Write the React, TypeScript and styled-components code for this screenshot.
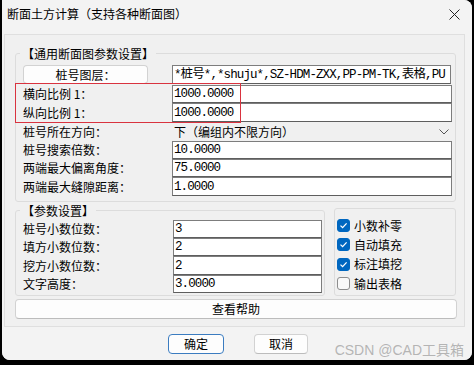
import React from 'react';
import styled, { createGlobalStyle } from 'styled-components';

const Global = createGlobalStyle`
  html, body { margin: 0; padding: 0; background: #000; }
  body {
    width: 474px; height: 365px; overflow: hidden;
    font-family: "Noto Sans CJK SC", "Noto Sans", sans-serif;
    font-size: 12px; color: #000;
  }
  * { box-sizing: border-box; }
`;

const Window = styled.div`
  position: relative;
  margin-left: 2px;
  width: 470px;
  height: 360px;
  background: #f0f0f0;
  border-radius: 0 8px 8px 8px;
  overflow: hidden;
  display: flex;
  flex-direction: column;
`;

const TitleBar = styled.div`
  height: 28px;
  padding: 0 12px 0 5px;
  display: flex;
  align-items: center;
  justify-content: space-between;
  background: #f3f3f3;
  font-size: 12px;
  line-height: 16px;
`;

const Client = styled.div`
  flex: 1;
  padding: 6px 0 0 2px;
  display: flex;
  flex-direction: column;
  background: #f3f3f3;
`;

const Panel = styled.div`
  width: 461px;
  height: 293px;
  border: 1px solid #dfdfdf;
  background: #f0f0f0;
  padding: 10px 8px 0 10px;
  display: flex;
  flex-direction: column;
`;

const Group = styled.fieldset<{ $w?: number }>`
  margin: 0;
  padding: 0;
  width: ${(p) => (p.$w ? `${p.$w}px` : 'auto')};
  border: 1px solid #dcdcdc;
  border-radius: 3px;
  min-width: 0;
`;

const Legend = styled.legend`
  margin-left: 4px;
  padding: 0 2px;
  font-size: 12px;
  line-height: 17px;
  height: 17px;
`;

const Grid = styled.div<{ $cols: string; $rows: string; $pad: string }>`
  position: relative;
  display: grid;
  grid-template-columns: ${(p) => p.$cols};
  grid-template-rows: ${(p) => p.$rows};
  padding: ${(p) => p.$pad};
  align-items: center;
`;

const Label = styled.div`
  font-size: 12px;
  line-height: 16px;
  white-space: nowrap;
  padding-left: 1px;
`;

const Field = styled.div<{ $w?: number }>`
  height: 100%;
  width: ${(p) => (p.$w ? `${p.$w}px` : '100%')};
  background: #fff;
  border: 1px solid #7d7d7d;
  border-bottom-color: #5e5e5e;
  padding: 0 0 0 1px;
  font-family: "Liberation Mono", "Noto Sans CJK SC", monospace;
  font-size: 12.5px;
  letter-spacing: -0.9px;
  line-height: 16px;
  display: flex;
  align-items: center;
  white-space: nowrap;
  overflow: hidden;
`;

const Button = styled.div<{ $w?: number; $h?: number; $primary?: boolean }>`
  width: ${(p) => (p.$w ? `${p.$w}px` : '100%')};
  height: ${(p) => p.$h ?? 20}px;
  background: #fdfdfd;
  border: 1px solid ${(p) => (p.$primary ? '#3b7cc0' : '#d2d2d2')};
  border-bottom-color: ${(p) => (p.$primary ? '#3b7cc0' : '#bcbcbc')};
  border-radius: 4px;
  display: flex;
  align-items: center;
  justify-content: center;
  font-size: 12px;
  line-height: 16px;
`;

const Select = styled.div`
  height: 100%;
  display: flex;
  align-items: center;
  justify-content: space-between;
  padding: 0 3px 0 2px;
  font-size: 12px;
  line-height: 16px;
`;

const Highlight = styled.div`
  position: absolute;
  left: -1px;
  top: 21px;
  width: 226px;
  height: 40px;
  border: 1.5px solid #d9333f;
  pointer-events: none;
`;

const Row = styled.div`
  display: flex;
  align-items: flex-start;
`;

const CheckBox = styled.div`
  margin-left: 9px;
  margin-top: 6px;
  width: 122px;
  height: 88px;
  border: 1px solid #dcdcdc;
  border-radius: 3px;
  padding: 7px 0 0 2px;
  display: grid;
  grid-template-rows: repeat(4, 19.3px);
  align-items: center;
`;

const CheckItem = styled.div`
  display: flex;
  align-items: center;
  gap: 4px;
  font-size: 12px;
  line-height: 16px;
`;

const Box = styled.span<{ $on: boolean }>`
  width: 13px;
  height: 13px;
  border-radius: 3px;
  background: ${(p) => (p.$on ? '#0067c0' : '#f9f9f9')};
  border: 1px solid ${(p) => (p.$on ? '#0067c0' : '#8d8d8d')};
  display: inline-flex;
  align-items: center;
  justify-content: center;
`;

const HelpWrap = styled.div`
  margin-top: 3px;
  width: 442px;
`;

const Footer = styled.div`
  margin-top: 7px;
  display: flex;
  justify-content: center;
  gap: 30px;
`;

const Watermark = styled.div`
  position: absolute;
  right: 8px;
  top: 340px;
  font-family: "Liberation Sans", "Noto Sans CJK SC", sans-serif;
  font-size: 14px;
  line-height: 20px;
  color: rgba(160, 160, 160, 0.75);
  white-space: nowrap;
`;

const Check = ({ on, label }: { on: boolean; label: string }) => (
  <CheckItem>
    <Box $on={on}>
      {on && (
        <svg width="9" height="9" viewBox="0 0 9 9">
          <path d="M1.5 4.6 L3.6 6.6 L7.6 2.4" fill="none" stroke="#fff" strokeWidth="1.3" />
        </svg>
      )}
    </Box>
    {label}
  </CheckItem>
);

export default function App() {
  return (
    <>
      <Global />
      <Window>
        <TitleBar>
          <span>断面土方计算（支持各种断面图）</span>
          <svg width="11" height="11" viewBox="0 0 11 11">
            <path d="M0.5 0.5 L10.5 10.5 M10.5 0.5 L0.5 10.5" stroke="#222" strokeWidth="1" />
          </svg>
        </TitleBar>
        <Client>
          <Panel>
            <Group>
              <Legend>【通用断面图参数设置】</Legend>
              <Grid $cols="150px 280px" $rows="20px 18px 19px 19px 18px 18px 19px" $pad="3px 2px 5px 6px">
                <Button $w={125} $h={19} style={{ alignSelf: 'start', marginLeft: 1 }}>桩号图层：</Button>
                <Field $w={279} style={{ alignSelf: 'start', height: 19 }}>*桩号*,*shuju*,SZ-HDM-ZXX,PP-PM-TK,表格,PU</Field>
                <Label>横向比例 1：</Label>
                <Field>1000.0000</Field>
                <Label>纵向比例 1：</Label>
                <Field>1000.0000</Field>
                <Label>桩号所在方向：</Label>
                <Select>
                  <span>下（编组内不限方向）</span>
                  <svg width="10" height="6" viewBox="0 0 10 6">
                    <path d="M0.5 0.5 L5 5 L9.5 0.5" fill="none" stroke="#555" strokeWidth="1" />
                  </svg>
                </Select>
                <Label>桩号搜索倍数：</Label>
                <Field>10.0000</Field>
                <Label>两端最大偏离角度：</Label>
                <Field>75.0000</Field>
                <Label>两端最大缝隙距离：</Label>
                <Field>1.0000</Field>
                <Highlight />
              </Grid>
            </Group>
            <Row>
              <Group $w={310}>
                <Legend>【参数设置】</Legend>
                <Grid $cols="151px 149px" $rows="18px 18px 19px 18px" $pad="1px 2px 2px 6px">
                  <Label>桩号小数位数：</Label>
                  <Field>3</Field>
                  <Label>填方小数位数：</Label>
                  <Field>2</Field>
                  <Label>挖方小数位数：</Label>
                  <Field>2</Field>
                  <Label>文字高度：</Label>
                  <Field>3.0000</Field>
                </Grid>
              </Group>
              <CheckBox>
                <Check on label="小数补零" />
                <Check on label="自动填充" />
                <Check on label="标注填挖" />
                <Check on={false} label="输出表格" />
              </CheckBox>
            </Row>
            <HelpWrap>
              <Button $h={20}>查看帮助</Button>
            </HelpWrap>
          </Panel>
          <Footer>
            <Button $w={56} $primary>确定</Button>
            <Button $w={54}>取消</Button>
          </Footer>
        </Client>
        <Watermark>CSDN @CAD工具箱</Watermark>
      </Window>
    </>
  );
}
